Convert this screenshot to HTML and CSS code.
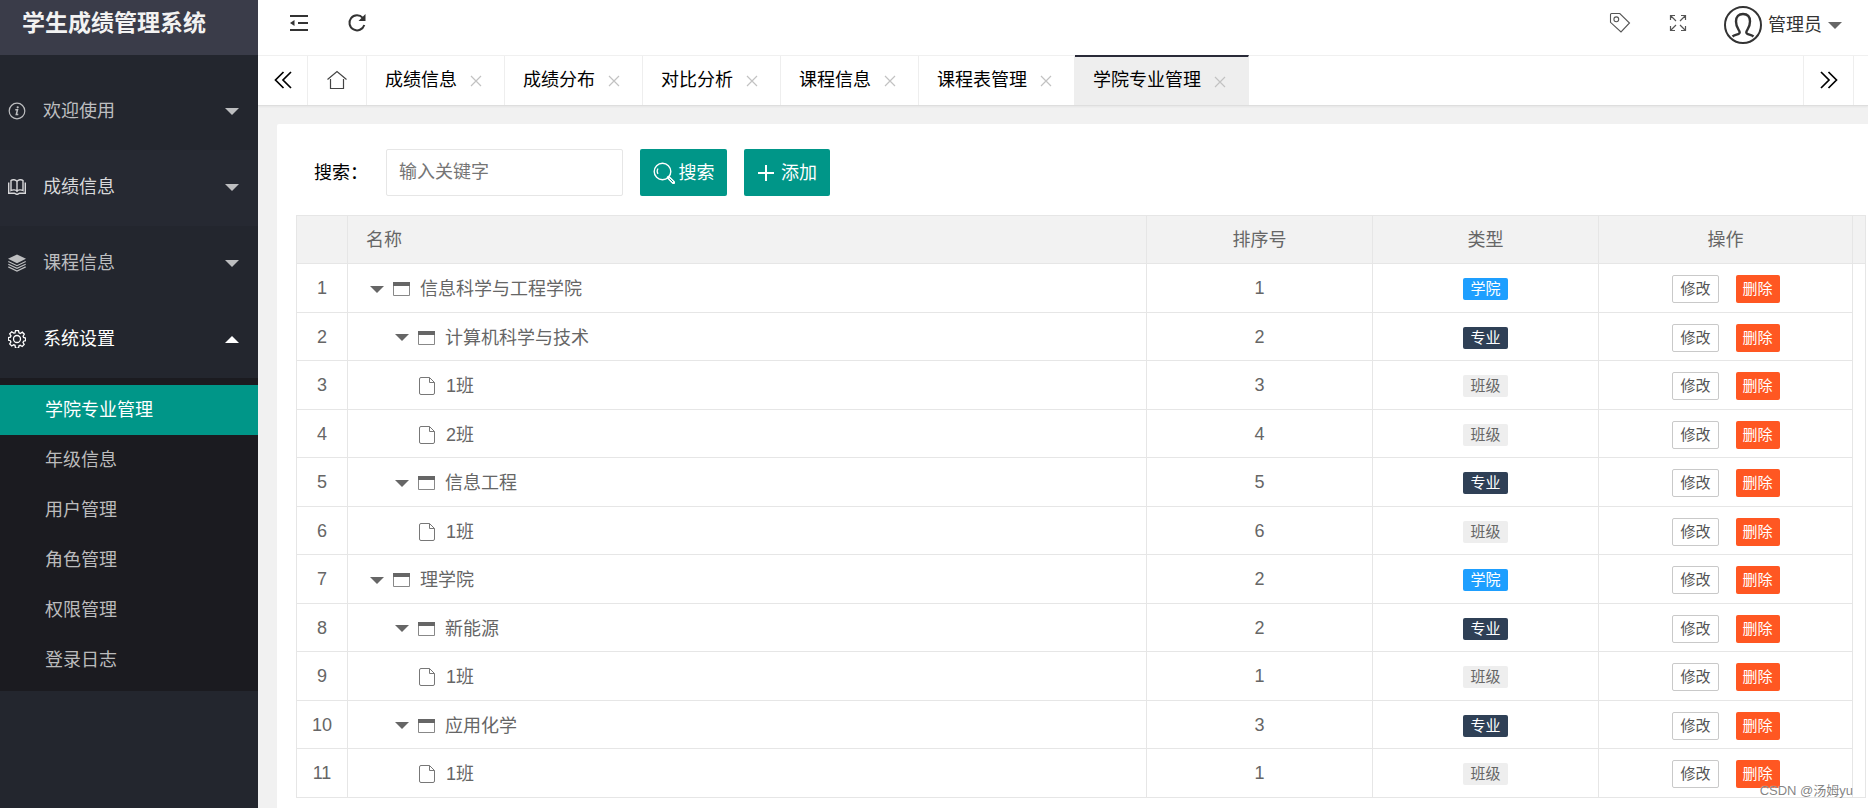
FILE: index.html
```html
<!DOCTYPE html>
<html lang="zh-CN">
<head>
<meta charset="utf-8">
<title>学生成绩管理系统</title>
<link rel="stylesheet" href="styles.css">
</head>
<body>
<svg class="sprite" aria-hidden="true">
  <symbol id="i-window" viewBox="0 0 17 14"><path d="M.5.5h16v13H.5z" fill="none" stroke="#888"/><path d="M0 0h17v4H0z" fill="#666"/></symbol>
  <symbol id="i-file" viewBox="0 0 16 18"><path d="M10.500.5H2A1.500 1.500 0 0 0 .5 2v14A1.500 1.500 0 0 0 2 17.500h12a1.500 1.500 0 0 0 1.500-1.500V5.500zM10.500.5v5h5" fill="none" stroke="#777"/></symbol>
  <symbol id="i-close" viewBox="0 0 12 12"><path d="M1 1l10 10M11 1L1 11" fill="none" stroke="#c2c2c2" stroke-width="1.200"/></symbol>
</svg>
<div class="app">
  <aside class="side">
    <h1 class="logo">学生成绩管理系统</h1>
    <nav class="menu">
      <button class="menu-item" type="button">
        <svg class="menu-icon" viewBox="0 0 18 18"><circle cx="9" cy="9" r="7.800" fill="none" stroke="currentColor" stroke-width="1.200"/><path d="M7.300 7.800h2.200l-1.200 4.800h2" fill="none" stroke="currentColor" stroke-width="1.500"/><circle cx="9.700" cy="5.300" r="1.100" fill="currentColor"/></svg>
        <span class="menu-label">欢迎使用</span><i class="caret"></i>
      </button>
      <button class="menu-item hover" type="button">
        <svg class="menu-icon" viewBox="0 0 18 18"><path d="M9 3.500C8 1.500 4.500 1.300 3 2.500v10c1.800-1 5-.8 6 .8 1-1.600 4.200-1.800 6-.8v-10c-1.500-1.200-5-1-6 1zM9 3.500v10M.7 4.500v10.800h5.800c1 0 1.500 1 2.500 1s1.500-1 2.500-1h5.800V4.500" fill="none" stroke="currentColor" stroke-width="1.400"/></svg>
        <span class="menu-label">成绩信息</span><i class="caret"></i>
      </button>
      <button class="menu-item" type="button">
        <svg class="menu-icon" viewBox="0 0 18 18"><path d="M9 .5l9 4.300-9 4.400L0 4.800z" fill="currentColor"/><path d="M.3 7.500L9 11.700l8.700-4.200M.3 10.200L9 14.400l8.700-4.200M.3 12.900L9 17.100l8.700-4.200" fill="none" stroke="currentColor" stroke-width="1.200"/></svg>
        <span class="menu-label">课程信息</span><i class="caret"></i>
      </button>
      <button class="menu-item open" type="button">
        <svg class="menu-icon" viewBox="0 0 18 18"><path d="M7.500.7h3l.5 2.200 1.300.6 2-1.300 2 2-1.200 2 .5 1.300 2 .5v2.600l-2 .6-.6 1.300 1.200 2-2 2-2-1.200-1.200.5-.5 2.300h-3L7 15.300l-1.300-.5-2 1.200-2-2 1.200-2-.6-1.300-2-.5V7.600l2.100-.5.600-1.300-1.300-2 2-2 2 1.300L7 2.900z" fill="none" stroke="currentColor" stroke-width="1.300"/><circle cx="9" cy="9" r="3.500" fill="none" stroke="currentColor" stroke-width="1.300"/></svg>
        <span class="menu-label">系统设置</span><i class="caret up"></i>
      </button>
      <div class="submenu">
        <a class="sub active" href="#">学院专业管理</a>
        <a class="sub" href="#">年级信息</a>
        <a class="sub" href="#">用户管理</a>
        <a class="sub" href="#">角色管理</a>
        <a class="sub" href="#">权限管理</a>
        <a class="sub" href="#">登录日志</a>
      </div>
    </nav>
  </aside>
  <div class="main">
    <header class="topbar">
      <button class="tool" type="button" aria-label="收起菜单"><svg width="20" height="18" viewBox="0 0 20 18"><path d="M1 2h18M9 9h10M1 16h18" stroke="#333" stroke-width="2"/><path d="M5.500 6v6L1 9z" fill="#333"/></svg></button>
      <button class="tool" type="button" aria-label="刷新"><svg width="20" height="20" viewBox="0 0 20 20"><path d="M15.800 4.800A7.600 7.600 0 1 0 17.300 12" fill="none" stroke="#333" stroke-width="2"/><path d="M18.500 1v7h-7z" fill="#333"/></svg></button>
      <span class="spacer"></span>
      <button class="tool" type="button" aria-label="便签"><svg width="22" height="22" viewBox="0 0 22 22"><path d="M2.500 1.500h8.300L20.500 11 12 20 1.500 10.300V2.500a1 1 0 0 1 1-1z" fill="none" stroke="#555" stroke-width="1.100"/><circle cx="7.300" cy="7.300" r="2.400" fill="none" stroke="#555" stroke-width="1.100"/></svg></button>
      <button class="tool" type="button" aria-label="全屏"><svg width="18" height="18" viewBox="0 0 18 18"><path d="M1.500 6V1.500H6M1.500 1.500L7 7M12 1.500h4.500V6M16.500 1.500L11 7M1.500 12v4.500H6M1.500 16.500L7 11M12 16.500h4.500V12M16.500 16.500L11 11" fill="none" stroke="#555" stroke-width="1.200"/></svg></button>
      <button class="user" type="button"><svg width="38" height="38" viewBox="0 0 38 38"><circle cx="19" cy="19" r="18" fill="none" stroke="#333" stroke-width="2"/><path d="M8.500 30.500c2.500-2.300 7-1.500 7.200-4 .2-2.800-3.700-3.700-3.700-11C12 10.500 14.800 8 19 8s7 2.500 7 7.500c0 7.300-3.900 8.200-3.700 11 .2 2.500 4.700 1.700 7.200 4" fill="none" stroke="#333" stroke-width="2.400"/></svg><span>管理员</span><i class="caret"></i></button>
    </header>
    <div class="tabs">
      <button class="tab-nav prev" type="button" aria-label="向左"><svg width="18" height="18" viewBox="0 0 18 18"><path d="M9.500 1L1.500 9l8 8M17 1L9 9l8 8" fill="none" stroke="#000" stroke-width="1.700"/></svg></button>
      <a class="tab-home" href="#" aria-label="主页"><svg width="20" height="20" viewBox="0 0 20 20"><path d="M.5 9.500L10 1.500l9.500 8M3.500 9v9.500h13V9" fill="none" stroke="#444" stroke-width="1.200"/></svg></a>
      <a class="tab" href="#">成绩信息<svg class="x"><use href="#i-close"/></svg></a>
      <a class="tab" href="#">成绩分布<svg class="x"><use href="#i-close"/></svg></a>
      <a class="tab" href="#">对比分析<svg class="x"><use href="#i-close"/></svg></a>
      <a class="tab" href="#">课程信息<svg class="x"><use href="#i-close"/></svg></a>
      <a class="tab" href="#">课程表管理<svg class="x"><use href="#i-close"/></svg></a>
      <a class="tab current" href="#">学院专业管理<svg class="x"><use href="#i-close"/></svg></a>
      <span class="spacer"></span>
      <button class="tab-nav next" type="button" aria-label="向右"><svg width="18" height="18" viewBox="0 0 18 18"><path d="M1 1l8 8-8 8M8.500 1l8 8-8 8" fill="none" stroke="#000" stroke-width="1.700"/></svg></button>
    </div>
    <main class="card">
      <form class="search">
        <label for="kw">搜索：</label>
        <input id="kw" type="text" placeholder="输入关键字">
        <button class="btn" type="button"><svg width="22" height="22" viewBox="0 0 22 22"><circle cx="9.500" cy="9.500" r="8.300" fill="none" stroke="#fff" stroke-width="1.400"/><path d="M5 12a5 5 0 0 1 0-5.500" fill="none" stroke="#fff" stroke-width="1.200"/><path d="M15.500 15.500l5 5" stroke="#fff" stroke-width="3.200" stroke-linecap="round"/><path d="M16.500 16.500l3.500 3.500" stroke="#009688" stroke-width="1"/></svg>搜索</button>
        <button class="btn add" type="button"><svg width="18" height="18" viewBox="0 0 18 18"><path d="M9 1v16M1 9h16" stroke="#fff" stroke-width="2"/></svg>添加</button>
      </form>
      <div class="table-box">
        <table class="grid">
          <colgroup><col class="c-no"><col><col class="c-mid"><col class="c-mid"><col class="c-op"><col class="c-gap"></colgroup>
          <thead><tr><th></th><th class="name">名称</th><th>排序号</th><th>类型</th><th>操作</th><th></th></tr></thead>
          <tbody id="rows"></tbody>
        </table>
      </div>
    </main>
  </div>
  <span class="mark">CSDN @汤姆yu</span>
</div>
<script src="rows.js"></script>
</body>
</html>
```

FILE: styles.css
```css
* { box-sizing: border-box; }
body {
  margin: 0;
  background: #f1f1f1;
  color: #000;
  font: 18px/24px "Liberation Sans", "Noto Sans CJK SC", sans-serif;
}
button, input { font: inherit; }
button { margin: 0; padding: 0; border: 0; background: none; color: inherit; cursor: pointer; }
a { color: inherit; text-decoration: none; }
svg { flex: none; display: block; }
.sprite { position: absolute; width: 0; height: 0; }
.app { position: relative; display: flex; min-height: 100vh; overflow: hidden; }
.spacer { flex: 1; }

.caret {
  width: 0;
  height: 0;
  border: 7px solid transparent;
  border-top-color: currentColor;
  border-bottom-width: 0;
}
.caret.up { border-width: 0 7px 7px; border-bottom-color: currentColor; }

.side { flex: none; width: 258px; background: #23262e; }
.logo {
  margin: 0 0 19px;
  padding: 7px 22px 16px;
  background: #3a3c49;
  color: #f2f2f2;
  font-size: 23px;
  line-height: 32px;
  font-weight: bold;
}
.menu-item {
  display: flex;
  align-items: center;
  gap: 17px;
  width: 100%;
  height: 76px;
  padding: 0 19px 2px 8px;
  color: #bdbec0;
  text-align: left;
}
.menu-item.hover { background: #262932; color: #d8d8da; }
.menu-item.hover .caret { color: #bdbec0; }
.menu-item.open { color: #fff; }
.menu-icon { width: 18px; height: 18px; }
.menu-label { flex: 1; }
.submenu { padding: 7px 0 6px; background: #1b1b20; }
.sub {
  display: block;
  padding: 13px 45px;
  color: #bbbbbc;
}
.sub.active { background: #009688; color: #fff; }

.main { flex: 1; min-width: 0; display: flex; flex-direction: column; }
.topbar {
  display: flex;
  align-items: center;
  height: 55px;
  padding: 0 26px 10px 12px;
  background: #fff;
}
.tool {
  display: flex;
  align-items: center;
  justify-content: center;
  width: 58px;
  height: 45px;
}
.user { display: flex; align-items: center; gap: 6px; margin-left: 17px; padding-top: 5px; color: #333; }
.user .caret { color: #666; }
.tabs {
  display: flex;
  height: 51px;
  background: #fff;
  border-top: 1px solid #f0f0f0;
  border-bottom: 1px solid #dedede;
  box-shadow: 0 1px 2px rgba(0, 0, 0, .05);
}
.tab-nav, .tab-home {
  display: flex;
  align-items: center;
  justify-content: center;
  width: 50px;
  padding-bottom: 2px;
  border-right: 1px solid #eee;
}
.tab-home { width: 59px; }
.tab-nav.next { width: 51px; margin-right: 14px; border-left: 1px solid #eee; }
.tab {
  display: flex;
  align-items: center;
  gap: 13px;
  padding: 0 22px 2px 18px;
  border-right: 1px solid #eee;
  white-space: nowrap;
}
.tab.current { margin-top: -1px; background: #eee; border-top: 2px solid #292a38; }
.x { width: 12px; height: 12px; margin-top: 3px; }

.card {
  flex: 1;
  margin: 18px 0 0 19px;
  padding: 25px 2px 10px 19px;
  background: #fff;
  border-radius: 2px 0 0 0;
}
.search { display: flex; align-items: center; height: 47px; margin-bottom: 19px; padding-left: 18px; }
.search label { width: 72px; white-space: nowrap; }
.search input {
  width: 237px;
  height: 47px;
  padding: 0 12px;
  border: 1px solid #e6e6e6;
  border-radius: 2px;
  outline: 0;
}
.search input::placeholder { color: #757575; opacity: 1; }
.btn {
  display: flex;
  align-items: center;
  justify-content: center;
  gap: 4px;
  width: 87px;
  height: 47px;
  margin-left: 17px;
  border-radius: 2px;
  background: #009688;
  color: #fff;
}
.btn.add { gap: 6px; width: 86px; }

.table-box { border: 1px solid #e6e6e6; }
.grid { width: 100%; table-layout: fixed; border-collapse: separate; border-spacing: 0; color: #666; }
.c-no { width: 51px; }
.c-mid { width: 226px; }
.c-op { width: 254px; }
.c-gap { width: 12px; }
.grid th, .grid td {
  padding: 0;
  border: solid #e6e6e6;
  border-width: 0 1px 1px 0;
  text-align: center;
  font-weight: normal;
}
.grid th { height: 48px; background: #f2f2f2; }
.grid th:last-child { border-right: 0; }
.grid td:last-child { border: 0; }
.grid tr:nth-child(odd) td { height: 49px; }
.grid tr:nth-child(even) td { height: 48px; }
.grid tbody tr:last-child td { height: 48px; border-bottom: 0; }
.grid th.name { padding-left: 18px; text-align: left; }
.node { display: flex; align-items: center; padding: 2px 0 0 22px; }
.node.l2 { padding-left: 47px; }
.node.l3 { padding-left: 71px; }
.node .caret { margin-right: 9px; }
.window { width: 17px; height: 14px; margin-right: 10px; }
.file { width: 16px; height: 18px; margin-right: 11px; }
.badge {
  display: inline-block;
  padding: 0 7px;
  border-radius: 2px;
  font-size: 15px;
  line-height: 22px;
  color: #fff;
  vertical-align: middle;
}
.school { background: #1e9fff; }
.major { background: #2f4056; }
.class { background: #eee; color: #666; }
.ops { display: flex; justify-content: center; gap: 17px; padding: 2px 0 0 1px; }
.mini { height: 28px; padding: 0 7px; border-radius: 2px; font-size: 15px; line-height: 26px; }
.edit { border: 1px solid #c9c9c9; color: #555; }
.del { background: #ff5722; color: #fff; }
.mark {
  position: absolute;
  right: 15px;
  bottom: 8px;
  color: rgba(110, 110, 110, .85);
  font-size: 13px;
  line-height: 18px;
  text-shadow: 0 0 1px #fff;
}
```

FILE: rows.js
```js
const data = [
  [1, '信息科学与工程学院', 1, '学院'],
  [2, '计算机科学与技术', 2, '专业'],
  [3, '1班', 3, '班级'],
  [3, '2班', 4, '班级'],
  [2, '信息工程', 5, '专业'],
  [3, '1班', 6, '班级'],
  [1, '理学院', 2, '学院'],
  [2, '新能源', 2, '专业'],
  [3, '1班', 1, '班级'],
  [2, '应用化学', 3, '专业'],
  [3, '1班', 1, '班级']
];
const kinds = { 学院: 'school', 专业: 'major', 班级: 'class' };
document.getElementById('rows').innerHTML = data.map(([level, name, order, kind], i) => `
  <tr>
    <td>${i + 1}</td>
    <td><div class="node l${level}">${level < 3
      ? '<i class="caret"></i><svg class="window"><use href="#i-window"/></svg>'
      : '<svg class="file"><use href="#i-file"/></svg>'}${name}</div></td>
    <td>${order}</td>
    <td><span class="badge ${kinds[kind]}">${kind}</span></td>
    <td><div class="ops"><button class="mini edit" type="button">修改</button><button class="mini del" type="button">删除</button></div></td>
    <td></td>
  </tr>`).join('');
```
